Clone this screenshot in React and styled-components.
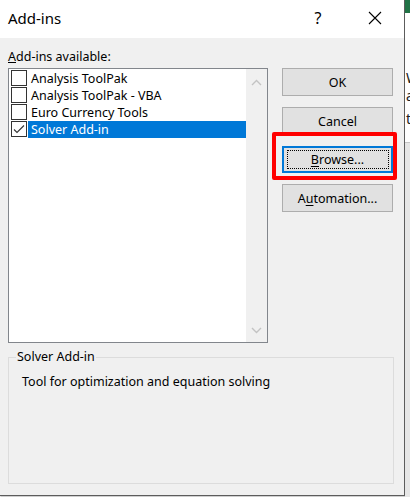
import React, { useState } from 'react'
import styled, { createGlobalStyle } from 'styled-components';

const GlobalStyle = createGlobalStyle`
    html, body {
        margin: 0;
        padding: 0;
        background: #e3e3e3;
        overflow: hidden;
    }
    body {
        font-family: 'Noto Sans', 'Open Sans', Arial, sans-serif;
        font-size: 12.5px;
        color: #000;
    }
`

const Screen = styled.div`
    display: flex;
    width: 410px;
    height: 497px;
    overflow: hidden;
`

const Dialog = styled.div`
    width: 404px;
    height: 495px;
    flex: none;
    border-right: 1px solid #5c5c5c;
    border-bottom: 1px solid #5c5c5c;
    background: #f0f0f0;
    display: flex;
    flex-direction: column;
    box-shadow: 1px 1px 0 #cfcfcf;
`

const TitleBar = styled.div`
    height: 38px;
    flex: none;
    background: #fff;
    display: flex;
    align-items: center;
    h1 {
        flex: 1;
        margin: 0;
        padding-left: 8px;
        font-size: 15px;
        font-weight: normal;
        padding-bottom: 2px;
    }
`

const CaptionButton = styled.div`
    width: ${p => p.w}px;
    height: 38px;
    display: flex;
    align-items: center;
    justify-content: center;
    font-size: 16px;
    padding-bottom: 2px;
    box-sizing: border-box;
`

const Body = styled.div`
    flex: 1;
    padding: 11px 10px 0 8px;
    display: flex;
    flex-direction: column;
`

const Top = styled.div`
    display: grid;
    grid-template-columns: 260px 111px;
    column-gap: 14px;
`

const FieldLabel = styled.div`
    line-height: 16px;
    margin-bottom: 3px;
`

const ListBox = styled.div`
    height: 275px;
    box-sizing: border-box;
    border: 1px solid #82868c;
    background: #fff;
    display: flex;
`

const Items = styled.div`
    flex: 1;
    padding: 1px 0 0 2px;
`

const Item = styled.div`
    height: 17px;
    display: flex;
    align-items: flex-start;
`

const Check = styled.div`
    width: 14px;
    height: 14px;
    border: 1px solid #333;
    background: #fff;
    margin-right: 1px;
    flex: none;
    svg {
        display: block;
    }
`

const ItemText = styled.div`
    flex: 1;
    height: 17px;
    line-height: 17px;
    padding-left: 3px;
    white-space: nowrap;
    background: ${p => p.selected ? '#0078d7' : 'transparent'};
    color: ${p => p.selected ? '#fff' : '#000'};
`

const ScrollBar = styled.div`
    width: 21px;
    background: #f0f0f0;
    display: flex;
    flex-direction: column;
    justify-content: space-between;
    align-items: center;
    padding: 10px 0 8px;
`

const Buttons = styled.div`
    display: flex;
    flex-direction: column;
    padding-top: 19px;
    gap: 11px;
`

const Button = styled.div`
    position: relative;
    height: ${p => p.h || 28}px;
    box-sizing: border-box;
    border: ${p => p.focused ? '2px solid #0078d7' : '1px solid #adadad'};
    background: #e1e1e1;
    display: flex;
    align-items: center;
    justify-content: center;
    u {
        text-decoration: underline;
        text-underline-offset: 2px;
    }
`

const FocusRect = styled.div`
    position: absolute;
    inset: 2px 2px 2px 3px;
    border: 1px dotted #000;
`

const Highlight = styled.div`
    position: absolute;
    left: -12px;
    top: -16px;
    right: -6px;
    bottom: -9px;
    border: 4px solid #ff0000;
    border-radius: 2px;
    pointer-events: none;
`

const GroupBox = styled.fieldset`
    margin: 6px 0 0;
    padding: 0;
    height: 135px;
    box-sizing: border-box;
    border: 1px solid #dcdcdc;
    legend {
        margin-left: 7px;
        padding: 0 1px;
        line-height: 16px;
    }
    p {
        margin: 0;
        padding: 9px 0 0 13px;
        line-height: 16px;
    }
`

// the bit of the Excel window that shows to the right of the dialog
const Backdrop = styled.div`
    flex: 1;
    display: flex;
    flex-direction: column;
    overflow: hidden;
    .ribbon {
        height: 13px;
        background: #217346;
    }
    .tabs {
        height: 130px;
        background: #fff;
        border-bottom: 1px solid #c6c6c6;
        padding: 56px 0 0 1px;
        font-size: 14px;
        line-height: 18px;
        color: #222;
        box-sizing: border-box;
    }
    .gap {
        margin-top: 5px;
    }
    .grid {
        flex: 1;
        background: #e6e6e6;
    }
`

const Chevron = ({ up }) => (
    <svg width="11" height="7" viewBox="0 0 11 7">
        <path d={up ? 'M1 6 L5.5 1.5 L10 6' : 'M1 1 L5.5 5.5 L10 1'} fill="none" stroke="#c3c3c3" strokeWidth="1.4" />
    </svg>
)

const addIns = [
    { name: 'Analysis ToolPak', checked: false },
    { name: 'Analysis ToolPak - VBA', checked: false },
    { name: 'Euro Currency Tools', checked: false },
    { name: 'Solver Add-in', checked: true },
]

export default function App() {
    const [selected, setSelected] = useState(3);

    return (
        <Screen>
            <GlobalStyle />
            <Dialog>
                <TitleBar>
                    <h1>Add-ins</h1>
                    <CaptionButton w={56}>?</CaptionButton>
                    <CaptionButton w={58}>
                        <svg width="14" height="14" viewBox="0 0 14 14">
                            <path d="M1 1 L13 13 M13 1 L1 13" stroke="#000" strokeWidth="1.1" />
                        </svg>
                    </CaptionButton>
                </TitleBar>
                <Body>
                    <Top>
                        <div>
                            <FieldLabel><u>A</u>dd-ins available:</FieldLabel>
                            <ListBox>
                                <Items>
                                    {addIns.map((a, i) => (
                                        <Item key={a.name} onClick={() => setSelected(i)}>
                                            <Check>
                                                {a.checked && (
                                                    <svg width="14" height="14" viewBox="0 0 14 14">
                                                        <path d="M2 7.5 L5 10.5 L12 3.5" fill="none" stroke="#333" strokeWidth="1.1" />
                                                    </svg>
                                                )}
                                            </Check>
                                            <ItemText selected={selected === i}>{a.name}</ItemText>
                                        </Item>
                                    ))}
                                </Items>
                                <ScrollBar>
                                    <Chevron up />
                                    <Chevron />
                                </ScrollBar>
                            </ListBox>
                        </div>
                        <Buttons>
                            <Button>OK</Button>
                            <Button>Cancel</Button>
                            <Button focused h={27}>
                                <FocusRect />
                                <span><u>B</u>rowse...</span>
                                <Highlight />
                            </Button>
                            <Button>
                                <span>A<u>u</u>tomation...</span>
                            </Button>
                        </Buttons>
                    </Top>
                    <GroupBox>
                        <legend>Solver Add-in</legend>
                        <p>Tool for optimization and equation solving</p>
                    </GroupBox>
                </Body>
            </Dialog>
            <Backdrop>
                <div className="ribbon" />
                <div className="tabs">
                    <div>W</div>
                    <div>ar</div>
                    <div className="gap">ti</div>
                </div>
                <div className="grid" />
            </Backdrop>
        </Screen>
    )
}
